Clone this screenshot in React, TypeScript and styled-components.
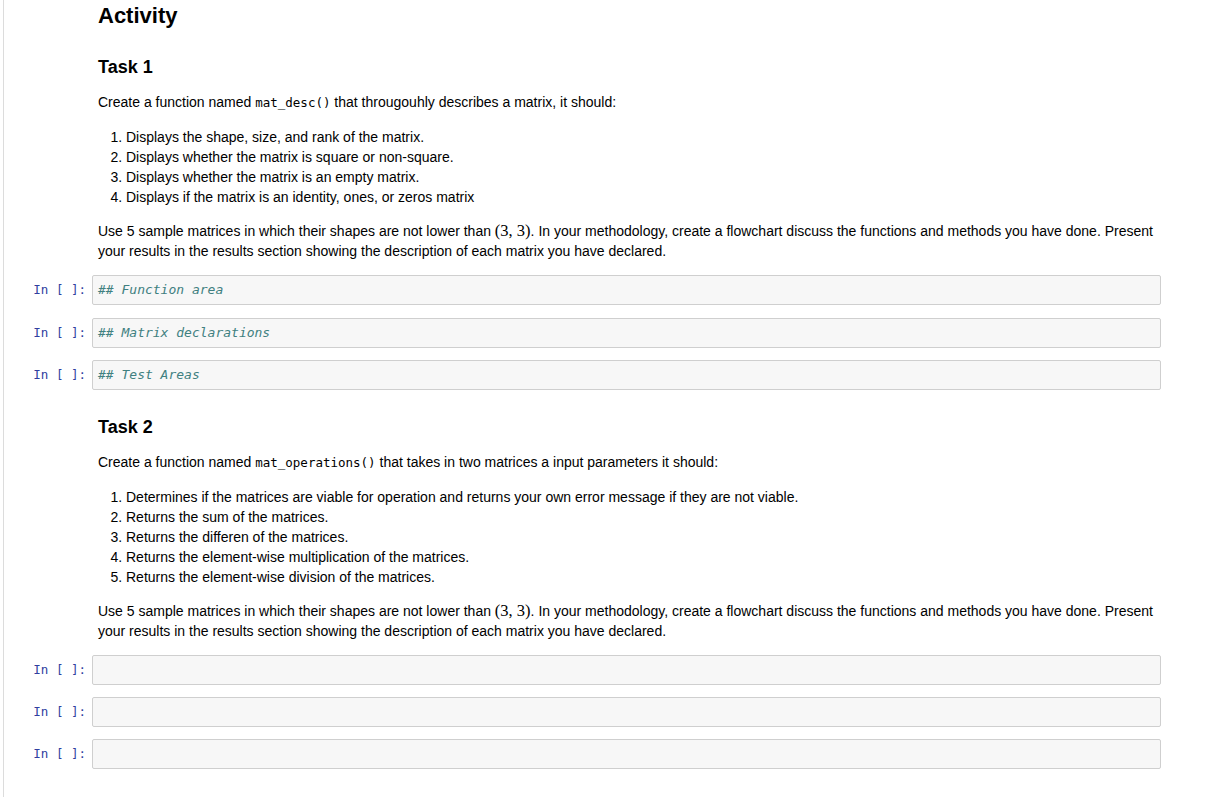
import React from "react";
import styled, { createGlobalStyle } from "styled-components";

const GlobalStyle = createGlobalStyle`
  html, body {
    margin: 0;
    padding: 0;
    background: #fff;
  }

  body {
    font-family: "Liberation Sans", Arial, Helvetica, sans-serif;
    font-size: 14px;
    line-height: 20px;
    color: #000;
  }
`;

const mono = `"DejaVu Sans Mono", "Liberation Mono", monospace`;

const Notebook = styled.div`
  margin-left: 3px;
  width: 1163px;
  min-height: 100vh;
  padding-top: 3px;
  box-sizing: border-box;
  border-left: 1px solid #dcdcdc;
`;

const Cell = styled.div<{ $top?: number }>`
  display: flex;
  align-items: stretch;
  padding: 0 5px;
  margin-top: ${(p) => p.$top ?? 0}px;
`;

const Prompt = styled.div`
  flex: 0 0 83px;
  box-sizing: border-box;
  padding-right: 6px;
  text-align: right;
  font-family: ${mono};
  font-size: 12.5px;
  line-height: 30px;
  color: #303f9f;
  white-space: pre;
`;

const InputArea = styled.div`
  flex: 1;
  height: 30px;
  box-sizing: border-box;
  border: 1px solid #cfcfcf;
  border-radius: 2px;
  background: #f7f7f7;
  padding: 0 5px;
  font-family: ${mono};
  font-size: 13px;
  line-height: 28px;
`;

const Comment = styled.span`
  color: #408080;
  font-style: italic;
`;

const Rendered = styled.div`
  flex: 1;
  padding-left: 6px;
`;

const H1 = styled.h1`
  margin: 0;
  font-size: 22px;
  line-height: 26px;
  font-weight: bold;
`;

const H3 = styled.h3`
  margin: 0;
  font-size: 18px;
  line-height: 22px;
  font-weight: bold;
`;

const Para = styled.p<{ $top: number }>`
  margin: ${(p) => p.$top}px 0 0;
`;

const List = styled.ol<{ $top: number }>`
  margin: ${(p) => p.$top}px 0 0;
  padding-left: 28px;

  li {
    line-height: 20px;
  }
`;

const Code = styled.code`
  font-family: ${mono};
  font-size: 12.5px;
  line-height: 0;
`;

const MathText = styled.span`
  font-family: "Liberation Serif", "Times New Roman", serif;
  font-size: 16.5px;
  line-height: 0;
`;

const CodeCell = ({ top, text }: { top: number; text?: string }) => (
  <Cell $top={top}>
    <Prompt>In [ ]:</Prompt>
    <InputArea>{text && <Comment>{text}</Comment>}</InputArea>
  </Cell>
);

const Shapes = () => (
  <>
    Use 5 sample matrices in which their shapes are not lower than <MathText>(3, 3)</MathText>. In your
    methodology, create a flowchart discuss the functions and methods you have done. Present your results
    in the results section showing the description of each matrix you have declared.
  </>
);

const task1 = [
  "Displays the shape, size, and rank of the matrix.",
  "Displays whether the matrix is square or non-square.",
  "Displays whether the matrix is an empty matrix.",
  "Displays if the matrix is an identity, ones, or zeros matrix",
];

const task2 = [
  "Determines if the matrices are viable for operation and returns your own error message if they are not viable.",
  "Returns the sum of the matrices.",
  "Returns the differen of the matrices.",
  "Returns the element-wise multiplication of the matrices.",
  "Returns the element-wise division of the matrices.",
];

export default function App() {
  return (
    <>
      <GlobalStyle />
      <Notebook>
        <Cell>
          <Prompt />
          <Rendered>
            <H1>Activity</H1>
          </Rendered>
        </Cell>

        <Cell $top={27}>
          <Prompt />
          <Rendered>
            <H3>Task 1</H3>
            <Para $top={14}>
              Create a function named <Code>mat_desc()</Code> that througouhly describes a matrix, it should:
            </Para>
            <List $top={15}>
              {task1.map((item) => (
                <li key={item}>{item}</li>
              ))}
            </List>
            <Para $top={14}>
              <Shapes />
            </Para>
          </Rendered>
        </Cell>

        <CodeCell top={14} text="## Function area" />
        <CodeCell top={12.5} text="## Matrix declarations" />
        <CodeCell top={12.5} text="## Test Areas" />

        <Cell $top={26}>
          <Prompt />
          <Rendered>
            <H3>Task 2</H3>
            <Para $top={14}>
              Create a function named <Code>mat_operations()</Code> that takes in two matrices a input
              parameters it should:
            </Para>
            <List $top={15}>
              {task2.map((item) => (
                <li key={item}>{item}</li>
              ))}
            </List>
            <Para $top={14}>
              <Shapes />
            </Para>
          </Rendered>
        </Cell>

        <CodeCell top={14} />
        <CodeCell top={12} />
        <CodeCell top={12} />
      </Notebook>
    </>
  );
}
